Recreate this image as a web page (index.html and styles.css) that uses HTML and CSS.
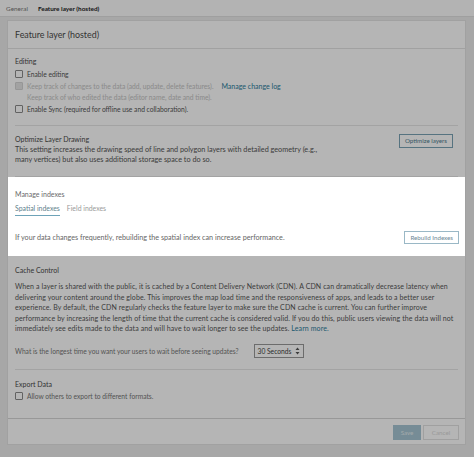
FILE: index.html
```html
<!DOCTYPE html>
<html>
<head>
<meta charset="utf-8">
<link rel="stylesheet" href="styles.css">
</head>
<body>
<div class="tabs">
  <span class="tab">General</span>
  <span class="tab active">Feature layer (hosted)</span>
</div>
<div class="main">
  <div class="panel">
    <div class="panel-head">Feature layer (hosted)</div>
    <div class="panel-body">
      <section class="sec editing">
        <div class="sec-title">Editing</div>
        <div class="row"><span class="cb"></span>Enable editing</div>
        <div class="row disabled"><span class="cb cb-dis"></span>Keep track of changes to the data (add, update, delete features).<a class="link change-log">Manage change log</a></div>
        <div class="row disabled"><span class="cb cb-none"></span>Keep track of who edited the data (editor name, date and time).</div>
        <div class="row"><span class="cb"></span>Enable Sync (required for offline use and collaboration).</div>
      </section>
      <section class="sec optimize">
        <div class="opt-text">
          <div class="sec-title">Optimize Layer Drawing</div>
          <p class="para narrow">This setting increases the drawing speed of line and polygon layers with detailed geometry (e.g., many vertices) but also uses additional storage space to do so.</p>
        </div>
        <button class="btn">Optimize layers</button>
      </section>
      <section class="sec highlight">
        <div class="sec-title">Manage indexes</div>
        <div class="subtabs">
          <span class="subtab on">Spatial indexes</span>
          <span class="subtab">Field indexes</span>
        </div>
        <div class="rebuild">
          <span class="rebuild-text">If your data changes frequently, rebuilding the spatial index can increase performance.</span>
          <button class="btn">Rebuild Indexes</button>
        </div>
      </section>
      <section class="sec cache">
        <div class="sec-title">Cache Control</div>
        <p class="para wide">When a layer is shared with the public, it is cached by a Content Delivery Network (CDN). A CDN can dramatically decrease latency when delivering your content around the globe. This improves the map load time and the responsiveness of apps, and leads to a better user experience. By default, the CDN regularly checks the feature layer to make sure the CDN cache is current. You can further improve performance by increasing the length of time that the current cache is considered valid. If you do this, public users viewing the data will not immediately see edits made to the data and will have to wait longer to see the updates. <a class="link">Learn more.</a></p>
        <div class="question">
          <span>What is the longest time you want your users to wait before seeing updates?</span>
          <span class="select">30 Seconds
            <svg width="5" height="8" viewBox="0 0 5 8"><path d="M2.5 0.5 L4.5 3 L0.5 3 Z M2.5 7.5 L4.5 5 L0.5 5 Z" fill="#555"/></svg>
          </span>
        </div>
      </section>
      <section class="sec export">
        <div class="sec-title">Export Data</div>
        <div class="row"><span class="cb"></span>Allow others to export to different formats.</div>
      </section>
    </div>
    <div class="footer">
      <button class="btn-save">Save</button>
      <button class="btn-cancel">Cancel</button>
    </div>
  </div>
</div>
</body>
</html>
```
FILE: styles.css
```css
* { box-sizing: border-box; }
html, body { margin: 0; padding: 0; }
body {
  width: 474px;
  height: 457px;
  overflow: hidden;
  background: #ececec;
  font-family: Lato, "Noto Sans", sans-serif;
  font-size: 6.7px;
  color: #555;
}
.tabs {
  height: 17px;
  background: #fdfdfd;
  border-bottom: 1px solid #e0e0e0;
  display: flex;
  align-items: center;
  padding-left: 6px;
  gap: 10px;
  font-size: 6.4px;
}
.tab { color: #777; }
.tab.active { color: #222; font-weight: 700; }
.main {
  padding: 3px 8px 0 7px;
  display: flex;
}
.panel {
  flex: 1;
  background: #fff;
  border: 1px solid #e3e3e3;
}
.panel-head {
  height: 28px;
  display: flex;
  align-items: center;
  padding-left: 7px;
  font-size: 8.9px;
  color: #4a4a4a;
  border-bottom: 1px solid #e3e3e3;
}
.panel-body { display: flex; flex-direction: column; }
.sec {
  margin: 0 7px;
  border-bottom: 1px solid #e6e6e6;
}
.sec-title {
  font-size: 7px;
  color: #4a4a4a;
}
.editing { padding: 8px 0 10px; }
.editing .sec-title { margin-bottom: 3px; }
.row {
  display: flex;
  align-items: center;
  height: 11.7px;
  white-space: nowrap;
}
.row.disabled { color: #c4c4c4; }
.cb {
  width: 8px;
  height: 8px;
  border: 1px solid #8a8a8a;
  border-radius: 1px;
  margin-right: 4px;
  background: #fff;
  flex: none;
}
.cb-dis { border-color: #d4d4d4; background: #e4e4e4; }
.cb-none { border-color: transparent; background: transparent; }
.link { color: #2a7d9c; text-decoration: none; }
.change-log { margin-left: 8px; font-size: 7px; }
.optimize {
  display: flex;
  justify-content: space-between;
  align-items: flex-start;
  padding: 9px 5px 11px 0;
}
.para {
  margin: 2px 0 0;
  line-height: 10.3px;
}
.para.narrow { max-width: 314px; font-size: 7.25px; }
.para.wide { font-size: 7px; letter-spacing: 0.1px; line-height: 10.5px; }
.btn {
  font-family: inherit;
  font-size: 6.2px;
  color: #4d7a8d;
  background: #fff;
  border: 1px solid #7aa3b5;
  height: 14px;
  padding: 0 5px;
  margin-top: -1px;
  border-radius: 0;
}
.highlight {
  position: relative;
  z-index: 1;
  margin: 0;
  padding: 13px 6px 12px 7px;
  background: #fff;
  border-bottom: none;
  box-shadow: 0 0 0 3000px rgba(0, 0, 0, 0.29);
}
.highlight .sec-title { color: #6a6a6a; }
.subtabs {
  display: flex;
  gap: 7px;
  margin-top: 6px;
  height: 15px;
  align-items: flex-start;
}
.subtab { color: #9a9a9a; padding-bottom: 3px; font-size: 6.9px; }
.subtab.on { color: #5f7f8d; border-bottom: 1.5px solid #6ea3b8; }
.rebuild {
  display: flex;
  justify-content: space-between;
  align-items: center;
  margin-top: 12px;
}
.rebuild-text { color: #666666; font-size: 7.2px; }
.rebuild .btn { margin-top: 0; height: 13px; color: #6b8895; border-color: #9ab8c6; }
.cache { padding: 10px 0 11px; }
.cache .para { margin-top: 7px; }
.question {
  display: flex;
  align-items: center;
  gap: 15px;
  margin-top: 10px;
  color: #777;
}
.select {
  display: flex;
  align-items: center;
  gap: 4px;
  height: 14px;
  padding: 0 3px;
  border: 1px solid #999;
  color: #444;
  background: #fff;
}
.export { padding: 10px 0 16px; border-bottom: none; }
.export .sec-title { margin-bottom: 2px; }
.export .row { color: #777; }
.footer {
  border-top: 1px solid #d6d6d6;
  display: flex;
  justify-content: flex-end;
  gap: 2px;
  padding: 6px 6px 4px;
}
.btn-save, .btn-cancel {
  font-family: inherit;
  font-size: 6.2px;
  height: 15px;
  border-radius: 0;
}
.btn-save {
  width: 28px;
  background: #a7c6d3;
  border: 1px solid #a7c6d3;
  color: #e5eef2;
}
.btn-cancel {
  width: 36px;
  background: #fff;
  border: 1px solid #e2e2e2;
  color: #d8d8d8;
}
```
